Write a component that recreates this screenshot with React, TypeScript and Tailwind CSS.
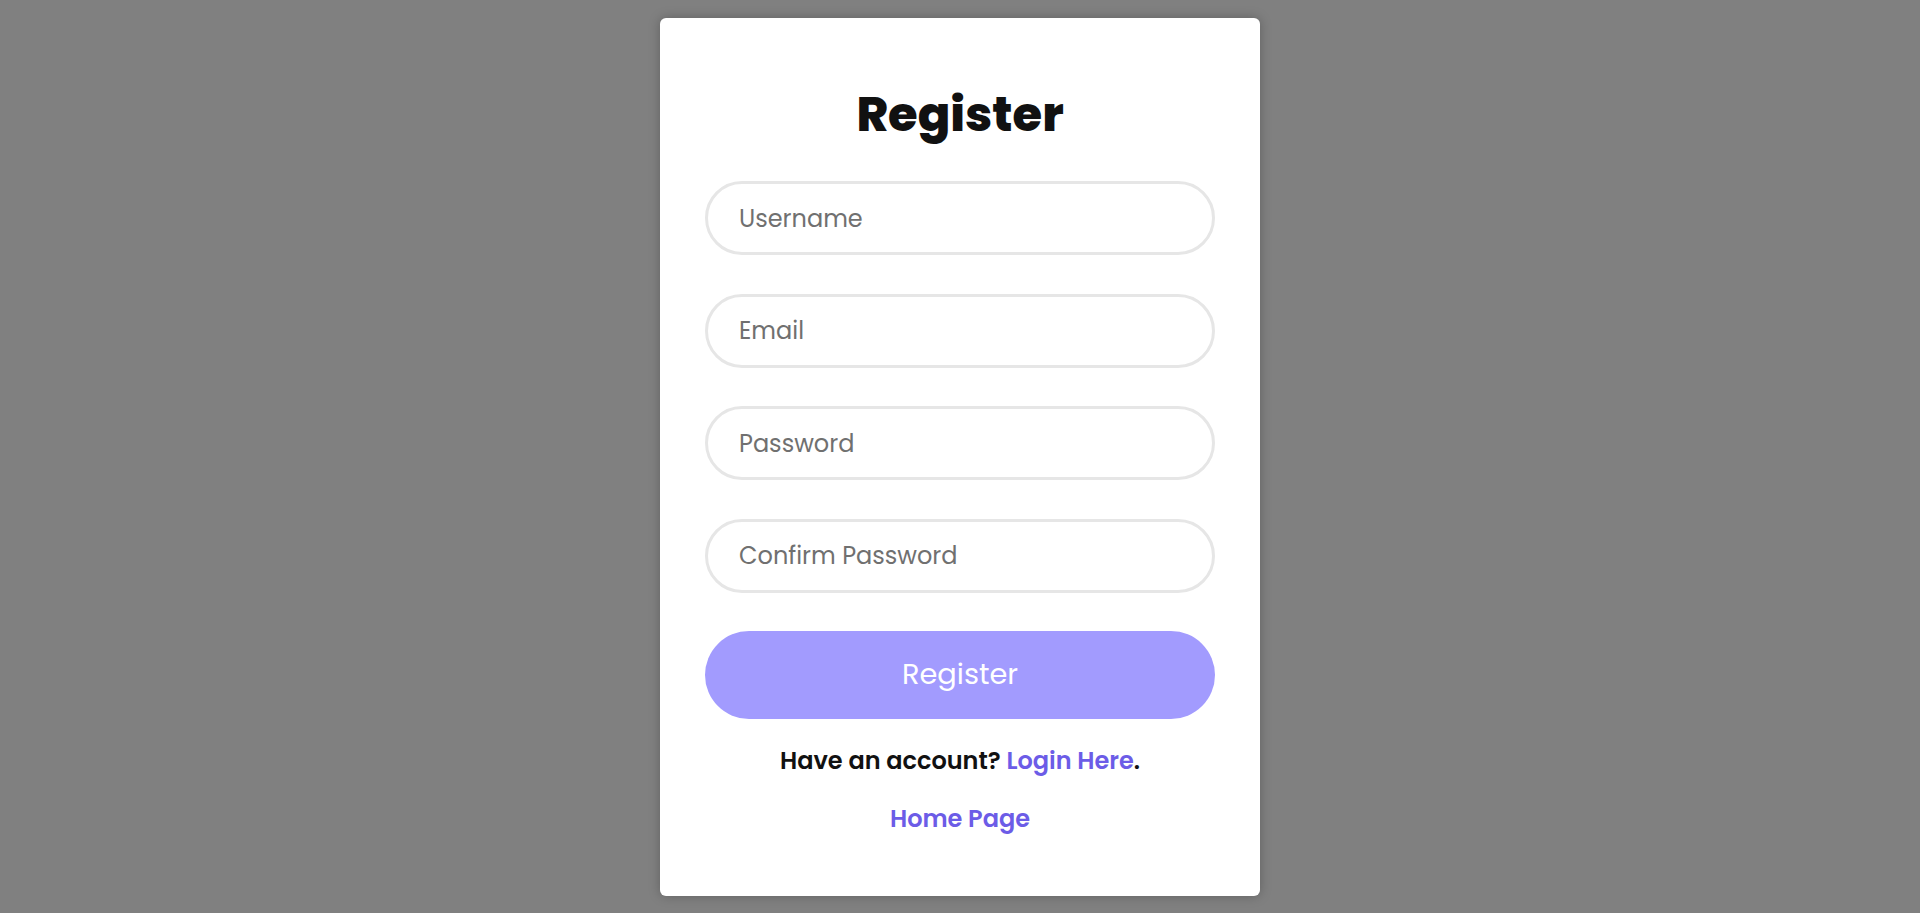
import React from "react";

const font = { fontFamily: '"Poppins", "Inter", "Noto Sans", sans-serif' };

function Field({ placeholder, type = "text" }: { placeholder: string; type?: string }) {
  return (
    <input
      type={type}
      placeholder={placeholder}
      className="block w-full h-[74px] rounded-full border-[3px] border-[#e6e6e6] bg-white pl-[31px] pr-[31px] text-[24px] text-[#333] placeholder:text-[#707070] outline-none"
      style={font}
    />
  );
}

export default function App() {
  return (
    <div className="min-h-screen w-full bg-[#808080] flex justify-center pt-[18px]" style={font}>
      <div className="w-[600px] h-[878px] bg-white rounded-md shadow-[0_0_12px_rgba(0,0,0,0.25)] px-[45px] pt-[73px] pb-[62px] flex flex-col">
        <h1 className="text-center text-[48px] leading-[48px] font-extrabold text-[#111]">Register</h1>
        <form className="mt-[42px] flex flex-col gap-[38.5px]" onSubmit={(e) => e.preventDefault()}>
          <Field placeholder="Username" />
          <Field placeholder="Email" type="email" />
          <Field placeholder="Password" type="password" />
          <Field placeholder="Confirm Password" type="password" />
          <button
            type="submit"
            className="h-[88px] w-full rounded-full bg-[#a29bfe] text-white text-[28.8px] font-normal"
            style={font}
          >
            Register
          </button>
        </form>
        <p className="mt-[26px] text-center text-[24px] leading-[32px] font-semibold text-[#111]">
          Have an account? <a href="#" className="text-[#6c5ce7]">Login Here</a>.
        </p>
        <p className="mt-[26px] text-center text-[24px] leading-[32px] font-semibold">
          <a href="#" className="text-[#6c5ce7]">Home Page</a>
        </p>
      </div>
    </div>
  );
}
